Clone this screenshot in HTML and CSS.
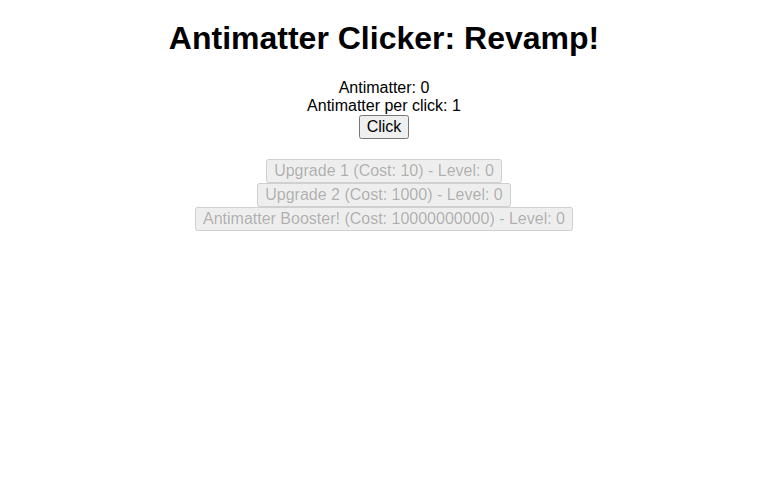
FILE: index.html
```html
<!DOCTYPE html>
<html lang="en">
<head>
  <meta charset="UTF-8" />
  <title>Antimatter Clicker: Revamp!</title>
  <link rel="stylesheet" href="styles.css">
</head>
<body>
  <h1>Antimatter Clicker: Revamp!</h1>

  <div class="stats">
    <div>Antimatter: <span id="antimatter">0</span></div>
    <div>Antimatter per click: <span id="perClick">1</span></div>
    <button id="clickBtn">Click</button>
  </div>

  <div class="upgrades">
    <button id="up1" disabled>Upgrade 1 (Cost: 10) - Level: 0</button>
    <button id="up2" disabled>Upgrade 2 (Cost: 1000) - Level: 0</button>
    <button id="booster" disabled>Antimatter Booster! (Cost: 10000000000) - Level: 0</button>
  </div>
</body>
</html>
```

FILE: styles.css
```css
body {
  font-family: 'Liberation Sans', Arial, sans-serif;
  text-align: center;
  margin: 0;
}
h1 {
  font-size: 32px;
  margin: 20px 0 22px;
}
button {
  font-family: 'Liberation Sans', Arial, sans-serif;
  font-size: 16px;
}
.stats, .upgrades {
  display: flex;
  flex-direction: column;
  align-items: center;
}
.upgrades {
  margin-top: 20px;
}
```
